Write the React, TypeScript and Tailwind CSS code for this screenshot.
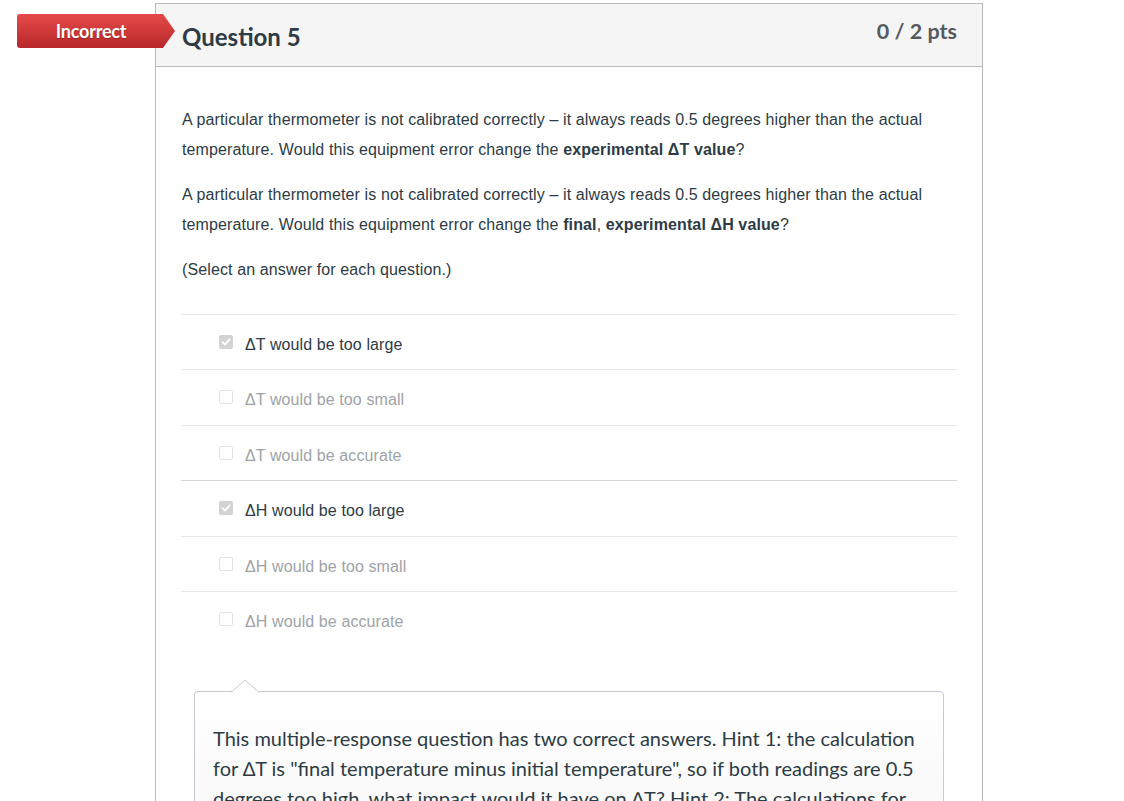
import React from "react";

const sans = { fontFamily: '"Liberation Sans", Arial, sans-serif' };

function Check({ checked }: { checked: boolean }) {
  if (checked) {
    return (
      <span className="flex h-[14px] w-[14px] items-center justify-center rounded-[2px] bg-[#d3d3d3]">
        <svg width="10" height="10" viewBox="0 0 10 10">
          <path d="M1.5 5.2 L4 7.6 L8.6 2.4" fill="none" stroke="#ffffff" strokeWidth="1.8" strokeLinecap="round" strokeLinejoin="round" />
        </svg>
      </span>
    );
  }
  return <span className="block h-[14px] w-[14px] rounded-[2px] border border-[#e2e2e2] bg-white" />;
}

const answers = [
  { label: "ΔT would be too large", checked: true, group: false },
  { label: "ΔT would be too small", checked: false, group: false },
  { label: "ΔT would be accurate", checked: false, group: false },
  { label: "ΔH would be too large", checked: true, group: true },
  { label: "ΔH would be too small", checked: false, group: false },
  { label: "ΔH would be accurate", checked: false, group: false },
];

export default function App() {
  return (
    <div className="relative min-h-[801px] w-[1124px] overflow-hidden bg-white">
      {/* Incorrect badge */}
      <div
        className="absolute left-[17px] top-[14px] z-10 flex h-[34px] w-[158px] items-center rounded-l-[3px] bg-gradient-to-b from-[#e64a4a] to-[#b8272a]"
        style={{ clipPath: "polygon(0 0, 146px 0, 158px 50%, 146px 100%, 0 100%)" }}
      >
        <span
          className="w-[148px] text-center text-[18px] font-bold leading-none tracking-[-0.2px] text-white"
          style={{ fontFamily: "Lato, sans-serif", textShadow: "0 1px 1px rgba(0,0,0,0.25)" }}
        >
          Incorrect
        </span>
      </div>

      <div className="ml-[155px] mt-[3px] w-[828px] border border-b-0 border-[#b9b9b9]">
        {/* Header */}
        <div className="flex h-[63px] items-start justify-between border-b border-[#b9b9b9] bg-[#f5f5f5] pl-[26px] pr-[25px]" style={{ fontFamily: "Lato, sans-serif" }}>
          <h2 className="mt-[18px] text-[24px] font-bold leading-[30px] text-[#2d3b45]">Question 5</h2>
          <div className="mt-[12px] text-[21.5px] font-bold leading-[30px] text-[#555a5e]">0 / 2 pts</div>
        </div>

        {/* Body */}
        <div className="px-[25px] pt-[38px]" style={sans}>
          <div className="pl-[1px] text-[16px] leading-[30px] tracking-[0.12px] text-[#2d3b45]">
            <p>
              A particular thermometer is not calibrated correctly – it always reads 0.5 degrees higher than the actual temperature. Would this equipment error change the <b>experimental ΔT value</b>?
            </p>
            <p className="mt-[15px]">
              A particular thermometer is not calibrated correctly – it always reads 0.5 degrees higher than the actual temperature. Would this equipment error change the <b>final</b>, <b>experimental ΔH value</b>?
            </p>
            <p className="mt-[15px]">(Select an answer for each question.)</p>
          </div>

          <div className="mt-[29px]">
            {answers.map((a, i) => (
              <div
                key={i}
                className={`box-border flex h-[55.4px] items-start gap-[12px] border-t pl-[38px] ${a.group ? "border-[#d6d6d6]" : "border-[#e8e8e8]"}`}
              >
                <span className="mt-[20px]">
                  <Check checked={a.checked} />
                </span>
                <span className={`mt-[20px] text-[16px] leading-[20px] tracking-[0.1px] ${a.checked ? "text-[#2d3b45]" : "text-[#9ea3a7]"}`}>{a.label}</span>
              </div>
            ))}
          </div>

          {/* Hint box */}
          <div className="relative mx-[13px] mt-[45px] rounded-[4px] border border-[#c4cbd2] bg-gradient-to-b from-white to-[#f6f6f6] pb-[20px] pl-[18px] pr-[18px] pt-[31px]">
            <svg className="absolute left-[36px] top-[-13px]" width="28" height="14" viewBox="0 0 28 14">
              <path d="M0 13.5 L14 1 L28 13.5" fill="#ffffff" stroke="#c4cbd2" strokeWidth="1" />
              <rect x="0.8" y="13" width="26.4" height="2" fill="#ffffff" />
            </svg>
            <p className="text-[20px] leading-[30px] text-[#2d3b45]" style={{ fontFamily: "Lato, sans-serif" }}>
              This multiple-response question has two correct answers. Hint 1: the calculation for ∆T is "final temperature minus initial temperature", so if both readings are 0.5 degrees too high, what impact would it have on ∆T? Hint 2: The calculations for ∆H use ∆T, so whatever happens to ∆T will also affect the final ∆H value.
            </p>
          </div>
          <div className="h-[40px]" />
        </div>
      </div>
    </div>
  );
}
